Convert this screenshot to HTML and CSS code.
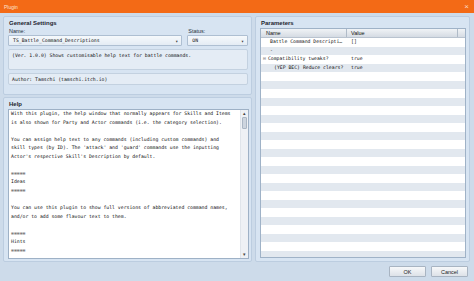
FILE: index.html
```html
<!DOCTYPE html>
<html lang="en">

<head>
    <meta charset="UTF-8">
    <title>Plugin</title>
    <link rel="stylesheet" href="styles.css">
</head>

<body>
    <div class="window">
        <div class="titlebar">
            <span class="title">Plugin</span>
            <span class="close">&#215;</span>
        </div>

        <div class="main">
            <div class="left">
                <div class="panel general">
                    <h2>General Settings</h2>
                    <div class="row">
                        <div class="field name-field">
                            <label>Name:</label>
                            <div class="combo">
                                <span>TS_Battle_Command_Descriptions</span>
                                <span class="arrow">&#9662;</span>
                            </div>
                        </div>
                        <div class="field status-field">
                            <label>Status:</label>
                            <div class="combo">
                                <span>ON</span>
                                <span class="arrow">&#9662;</span>
                            </div>
                        </div>
                    </div>
                    <div class="box desc">(Ver. 1.0.0) Shows customisable help text for battle commands.</div>
                    <div class="box author">Author: Tamschi (tamschi.itch.io)</div>
                </div>

                <div class="panel help">
                    <h2>Help</h2>
                    <div class="textarea">
                        <pre class="help-text">With this plugin, the help window that normally appears for Skills and Items
is also shown for Party and Actor commands (i.e. the category selection).

You can assign help text to any commands (including custom commands) and
skill types (by ID). The 'attack' and 'guard' commands use the inputting
Actor's respective Skill's Description by default.

=====
Ideas
=====

You can use this plugin to show full versions of abbreviated command names,
and/or to add some flavour text to them.

=====
Hints
=====</pre>
                        <div class="scrollbar">
                            <span class="sb-btn">&#9652;</span>
                            <span class="sb-thumb"></span>
                            <span class="sb-track"></span>
                            <span class="sb-btn">&#9662;</span>
                        </div>
                    </div>
                </div>
            </div>

            <div class="panel params">
                <h2>Parameters</h2>
                <div class="table">
                    <div class="thead">
                        <span class="col-name">Name</span>
                        <span class="col-value">Value</span>
                        <span class="col-end"></span>
                    </div>
                    <div class="tbody" id="rows"></div>
                </div>
            </div>
        </div>

        <div class="footer">
            <button class="btn">OK</button>
            <button class="btn">Cancel</button>
        </div>
    </div>

    <script>
// parameter rows, the rest of the list is empty striped rows
const params = [
    { name: "Battle Command Descripti\u2026", value: "[]" },
    { name: "-", value: "" },
    { name: "Compatibility tweaks?", value: "true", group: true },
    { name: "(YEP BEC) Reduce clears?", value: "true", child: true }
];

const rows = document.getElementById("rows");
for (let i = 0; i < 26; i++) {
    const p = params[i] || { name: "", value: "" };
    const row = document.createElement("div");
    row.className = "trow" + (i % 2 ? " odd" : "");

    const name = document.createElement("span");
    name.className = "col-name" + (p.child ? " child" : "");
    if (p.group) {
        const box = document.createElement("span");
        box.className = "toggle";
        box.textContent = "\u229f";
        name.appendChild(box);
    }
    name.appendChild(document.createTextNode(p.name));

    const value = document.createElement("span");
    value.className = "col-value";
    value.textContent = p.value;

    row.appendChild(name);
    row.appendChild(value);
    rows.appendChild(row);
}
    </script>
</body>

</html>
```

FILE: styles.css
```css
body {
    margin: 0;
    background: #c9d8e8;
    font-family: "Liberation Sans", Arial, sans-serif;
}

.window {
    width: 474px;
    height: 281px;
    display: flex;
    flex-direction: column;
    background: #cddbea;
    overflow: hidden;
}

.titlebar {
    height: 13px;
    flex: none;
    background: #f36a16;
    display: flex;
    justify-content: space-between;
    align-items: center;
    padding: 0 5px 0 4px;
    color: #fde3d2;
    font-size: 5px;
}

.close {
    font-size: 8px;
    color: #fbd9c4;
}

.main {
    height: 246px;
    flex: none;
    display: flex;
    gap: 3px;
    padding: 3px 4px 0 3px;
}

.left {
    width: 249px;
    display: flex;
    flex-direction: column;
    gap: 2px;
}

.panel {
    background: #d7e4f2;
    border: 1px solid #bccde0;
    border-radius: 2px;
    box-sizing: border-box;
    padding: 2px 3px 0 4px;
}

h2 {
    margin: 0;
    font-size: 6px;
    line-height: 8px;
    font-weight: bold;
    color: #1d2530;
    padding-left: 1px;
}

.general {
    height: 79px;
}

.help {
    flex: 1;
    display: flex;
    flex-direction: column;
    padding-bottom: 2px;
}

.params {
    flex: 1;
    display: flex;
    flex-direction: column;
    padding: 2px 3px 3px 4px;
}

.row {
    display: flex;
    gap: 5px;
    margin-top: 1px;
}

.field label {
    display: block;
    font-size: 5.5px;
    line-height: 7px;
    color: #2a3340;
    padding-left: 1px;
}

.name-field {
    width: 175px;
}

.status-field {
    width: 61px;
}

.combo {
    height: 11px;
    box-sizing: border-box;
    border: 1px solid #aebfd2;
    border-radius: 1px;
    background: linear-gradient(#f6f9fc, #e4ecf4);
    display: flex;
    justify-content: space-between;
    align-items: center;
    padding: 0 3px 0 4px;
    font-family: "DejaVu Sans Mono", monospace;
    font-size: 4.8px;
    color: #111;
}

.combo .arrow {
    font-size: 5px;
    color: #333;
}

.box {
    width: 240px;
    box-sizing: border-box;
    border: 1px solid #c3d1e0;
    border-radius: 2px;
    background: #e4ecf5;
    font-family: "DejaVu Sans Mono", monospace;
    font-size: 4.8px;
    color: #111;
    padding: 0 3px;
}

.desc {
    height: 21px;
    margin-top: 3px;
    padding-top: 3px;
}

.author {
    height: 12px;
    margin-top: 3px;
    line-height: 11px;
}

.textarea {
    flex: 1;
    margin-top: 1px;
    width: 241px;
    display: flex;
    background: #fff;
    border: 1px solid #9eb1c6;
    box-sizing: border-box;
}

.help-text {
    flex: 1;
    margin: 0;
    padding: 0 2px;
    font-family: "DejaVu Sans Mono", monospace;
    font-size: 4.8px;
    line-height: 8.55px;
    color: #111;
    white-space: pre;
    overflow: hidden;
}

.scrollbar {
    width: 7px;
    display: flex;
    flex-direction: column;
    background: #eef1f5;
    border-left: 1px solid #e0e5eb;
}

.sb-btn {
    height: 7px;
    font-size: 5px;
    line-height: 7px;
    text-align: center;
    color: #444;
}

.sb-thumb {
    height: 10px;
    margin: 0 1px;
    background: #cdd5df;
    border: 1px solid #aab6c4;
    border-radius: 1px;
}

.sb-track {
    flex: 1;
}

.table {
    flex: 1;
    margin-top: 1px;
    width: 206px;
    background: #fff;
    border: 1px solid #9fb2c7;
    box-sizing: border-box;
    overflow: hidden;
    font-family: "DejaVu Sans Mono", monospace;
    font-size: 4.8px;
    color: #111;
}

.thead {
    height: 8px;
    display: flex;
    background: linear-gradient(#f0f3f6, #d5dbe3);
    border-bottom: 1px solid #b9c3cf;
    font-family: "Liberation Sans", Arial, sans-serif;
    font-size: 5.5px;
    line-height: 8px;
}

.thead .col-name {
    border-right: 1px solid #b0bbc8;
}

.col-name {
    width: 86px;
    padding-left: 5px;
    box-sizing: border-box;
    white-space: nowrap;
    overflow: hidden;
}

.col-value {
    width: 110px;
    padding-left: 4px;
    box-sizing: border-box;
}

.col-end {
    flex: 1;
    border-left: 1px solid #b0bbc8;
}

.trow {
    height: 8.5px;
    display: flex;
    line-height: 8.5px;
    background: #fff;
}

.trow.odd {
    background: #e2e8ef;
}

.trow .col-name {
    padding-left: 9px;
}

.trow .col-name.child {
    padding-left: 13px;
}

.toggle {
    margin-left: -7px;
    margin-right: 2px;
    color: #777;
}

.footer {
    flex: 1;
    display: flex;
    justify-content: flex-end;
    align-items: flex-start;
    gap: 5px;
    padding: 4px 6px 0 0;
}

.btn {
    width: 37px;
    height: 11px;
    padding: 0;
    border: 1px solid #a8b4c2;
    border-radius: 1px;
    background: linear-gradient(#f7f8fa, #dde2e8);
    font-family: "Liberation Sans", Arial, sans-serif;
    font-size: 5.5px;
    color: #222;
}
```
